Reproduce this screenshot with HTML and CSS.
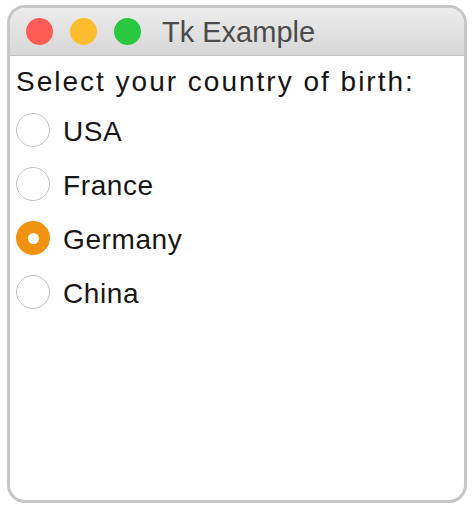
FILE: index.html
```html
<!DOCTYPE html>
<html>
<head>
<meta charset="utf-8">
<link rel="stylesheet" href="styles.css">
</head>
<body>
<div class="window">
  <div class="titlebar">
    <div class="lights">
      <span class="light red"></span>
      <span class="light yellow"></span>
      <span class="light green"></span>
    </div>
    <div class="title">Tk Example</div>
  </div>
  <div class="content">
    <div class="prompt">Select your country of birth:</div>
    <div class="row"><span class="radio"></span><span class="label">USA</span></div>
    <div class="row"><span class="radio"></span><span class="label">France</span></div>
    <div class="row"><span class="radio checked"></span><span class="label">Germany</span></div>
    <div class="row"><span class="radio"></span><span class="label">China</span></div>
  </div>
</div>
</body>
</html>
```
FILE: styles.css
```css
html, body {
  margin: 0;
  padding: 0;
  background: #ffffff;
}
body {
  padding: 5px 0 0 7px;
  font-family: "Liberation Sans", Arial, sans-serif;
}
.window {
  box-sizing: border-box;
  width: 460px;
  height: 498px;
  border: 3px solid #c6c6c6;
  border-radius: 18px;
  overflow: hidden;
  background: #ffffff;
}
.titlebar {
  box-sizing: border-box;
  height: 48px;
  display: flex;
  align-items: center;
  padding-left: 16px;
  background: linear-gradient(#ececec, #d7d7d7);
  border-bottom: 1px solid #c2c2c2;
}
.lights {
  display: flex;
  gap: 17px;
}
.light {
  width: 27px;
  height: 27px;
  border-radius: 50%;
  display: block;
}
.red { background: #fd5d56; }
.yellow { background: #fdbb2e; }
.green { background: #2ac840; }
.title {
  margin-left: 21px;
  font-size: 29px;
  color: #4b4b4b;
  margin-top: 1px;
}
.content {
  padding: 10px 0 0 6px;
}
.prompt {
  font-size: 28px;
  line-height: 32px;
  letter-spacing: 2px;
  color: #141414;
  margin-bottom: 5px;
}
.row {
  height: 54px;
  display: flex;
  align-items: center;
}
.radio {
  box-sizing: border-box;
  width: 34px;
  height: 34px;
  border-radius: 50%;
  border: 1.5px solid #c2c2c2;
  background: #ffffff;
  display: flex;
  align-items: center;
  justify-content: center;
}
.radio.checked {
  border: none;
  background: #f0910f;
}
.radio.checked::after {
  content: "";
  width: 11px;
  height: 11px;
  border-radius: 50%;
  background: #ffffff;
}
.label {
  margin-left: 13px;
  font-size: 28px;
  letter-spacing: 0.6px;
  color: #161616;
  padding-top: 3px;
}
```
